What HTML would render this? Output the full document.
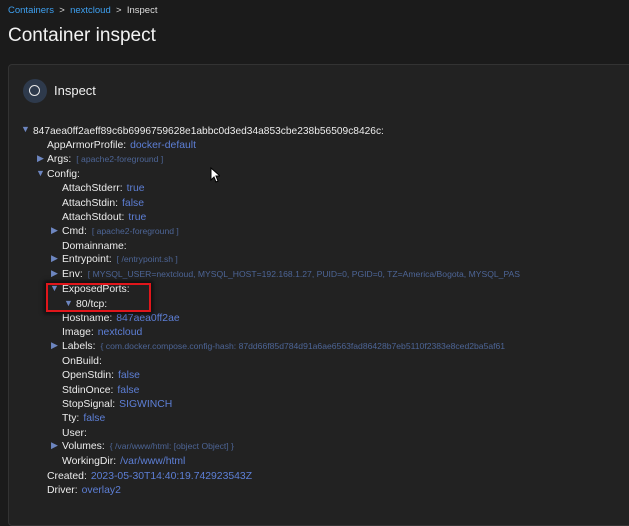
<!DOCTYPE html>
<html><head><style>
body{margin:0;width:629px;height:500px;overflow:hidden;background:#1b1b1b;font-family:"Liberation Sans",sans-serif;position:relative}
.bc{position:absolute;left:8px;top:5px;font-size:9.5px;color:#ddd}
.bc a{color:#3ea0f0}
h1{position:absolute;left:8px;top:25px;margin:0;font-size:19px;font-weight:normal;color:#f2f2f2}
.panel{position:absolute;left:8px;top:64px;width:640px;height:460px;background:#222;border:1px solid #333;border-radius:4px}
.ic{position:absolute;left:23px;top:79px;width:24px;height:24px;border-radius:50%;background:#2e3a4c}
.ic:after{content:"";position:absolute;left:6px;top:6px;width:9px;height:9px;border:1.6px solid #e8e8e8;border-radius:50%}
.tt{position:absolute;left:54px;top:83px;font-size:13px;color:#f0f0f0}
.w{position:absolute;left:0;top:1px;width:629px;height:500px}
.r{position:absolute;font-size:10.4px;color:#ececec;white-space:nowrap;line-height:14px;height:14px;display:flex;align-items:baseline}
.v{color:#5d7fd6;margin-left:4px}
.p{color:#4d6596;font-size:8.6px;margin-left:5px;line-height:14px}
.a{position:absolute;font-size:9px;color:#6d86c0;line-height:10px}
.box{position:absolute;left:46px;top:283px;width:101px;height:25px;border:2px solid #e0161b;box-shadow:0 0 4px 2px rgba(0,0,0,.6)}
</style></head><body>
<div class="bc"><a>Containers</a>&nbsp;&nbsp;&gt;&nbsp;&nbsp;<a>nextcloud</a>&nbsp;&nbsp;&gt;&nbsp;&nbsp;Inspect</div>
<h1>Container inspect</h1>
<div class="panel"></div>
<div class="ic"></div><div class="tt">Inspect</div>
<div class="w">
<div class="a" style="left:21px;top:123px">▼</div><div class="r" style="left:33px;top:124px;font-size:10.2px">847aea0ff2aeff89c6b6996759628e1abbc0d3ed34a853cbe238b56509c8426c:</div>
<div class="r" style="left:47px;top:138px">AppArmorProfile:<span class="v">docker-default</span></div>
<div class="a" style="left:37px;top:152px">▶</div><div class="r" style="left:47px;top:151px">Args:<span class="p">[ apache2-foreground ]</span></div>
<div class="a" style="left:36px;top:167px">▼</div><div class="r" style="left:47px;top:167px">Config:</div>
<div class="r" style="left:62px;top:181px">AttachStderr:<span class="v">true</span></div>
<div class="r" style="left:62px;top:196px">AttachStdin:<span class="v">false</span></div>
<div class="r" style="left:62px;top:210px">AttachStdout:<span class="v">true</span></div>
<div class="a" style="left:51px;top:224px">▶</div><div class="r" style="left:62px;top:223px">Cmd:<span class="p">[ apache2-foreground ]</span></div>
<div class="r" style="left:62px;top:239px">Domainname:</div>
<div class="a" style="left:51px;top:252px">▶</div><div class="r" style="left:62px;top:251px">Entrypoint:<span class="p">[ /entrypoint.sh ]</span></div>
<div class="a" style="left:51px;top:267px">▶</div><div class="r" style="left:62px;top:266px">Env:<span class="p">[ MYSQL_USER=nextcloud, MYSQL_HOST=192.168.1.27, PUID=0, PGID=0, TZ=America/Bogota, MYSQL_PAS</span></div>
<div class="a" style="left:50px;top:282px">▼</div><div class="r" style="left:62px;top:282px">ExposedPorts:</div>
<div class="a" style="left:64px;top:297px">▼</div><div class="r" style="left:76px;top:297px">80/tcp:</div>
<div class="r" style="left:62px;top:311px">Hostname:<span class="v">847aea0ff2ae</span></div>
<div class="r" style="left:62px;top:325px">Image:<span class="v">nextcloud</span></div>
<div class="a" style="left:51px;top:339px">▶</div><div class="r" style="left:62px;top:338px">Labels:<span class="p">{ com.docker.compose.config-hash: 87dd66f85d784d91a6ae6563fad86428b7eb5110f2383e8ced2ba5af61</span></div>
<div class="r" style="left:62px;top:354px">OnBuild:</div>
<div class="r" style="left:62px;top:368px">OpenStdin:<span class="v">false</span></div>
<div class="r" style="left:62px;top:383px">StdinOnce:<span class="v">false</span></div>
<div class="r" style="left:62px;top:397px">StopSignal:<span class="v">SIGWINCH</span></div>
<div class="r" style="left:62px;top:411px">Tty:<span class="v">false</span></div>
<div class="r" style="left:62px;top:426px">User:</div>
<div class="a" style="left:51px;top:439px">▶</div><div class="r" style="left:62px;top:438px">Volumes:<span class="p">{ /var/www/html: [object Object] }</span></div>
<div class="r" style="left:62px;top:454px">WorkingDir:<span class="v">/var/www/html</span></div>
<div class="r" style="left:47px;top:469px">Created:<span class="v">2023-05-30T14:40:19.742923543Z</span></div>
<div class="r" style="left:47px;top:483px">Driver:<span class="v">overlay2</span></div>
</div>
<div class="box"></div>
<svg style="position:absolute;left:210px;top:167px" width="10" height="16" viewBox="0 0 10 16"><path d="M1 1 L1 13 L4 10 L6 15 L8 14 L6 9 L10 9 Z" fill="#fff" stroke="#000" stroke-width="1"/></svg>
</body></html>
